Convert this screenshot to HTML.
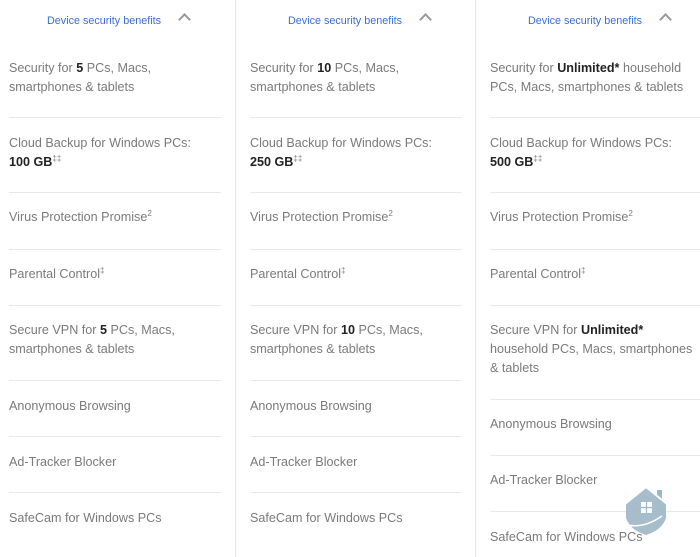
<!DOCTYPE html>
<html><head><meta charset="utf-8"><style>
body{margin:0;width:700px;height:557px;background:#fff;position:relative;overflow:hidden;font-family:"Liberation Sans",Arial,sans-serif}
.v{position:absolute;top:0;width:1px;height:557px;background:#e6e6e6}
.h{position:absolute;height:1px;background:#e8e8e8}
.t{position:absolute;font-size:12.6px;color:#7a7a7a;line-height:19px;white-space:nowrap;margin-top:2px}
.t b{color:#222}
.t sup{font-size:8px;line-height:0;vertical-align:5px}
.hd{position:absolute;top:15px;font-size:10.8px;color:#3a6fd3}
.ch{position:absolute;top:15px;width:7px;height:7px;border-left:2px solid #999;border-top:2px solid #999;transform:rotate(45deg)}
</style></head><body>
<div class="v" style="left:235px"></div><div class="v" style="left:475px"></div>

<div class="hd" style="left:47px">Device security benefits</div><div class="ch" style="left:180px"></div>
<div class="hd" style="left:288px">Device security benefits</div><div class="ch" style="left:421px"></div>
<div class="hd" style="left:528px">Device security benefits</div><div class="ch" style="left:661px"></div>

<!-- col1 -->
<div class="t" style="left:9px;top:57px">Security for <b>5</b> PCs, Macs,<br>smartphones &amp; tablets</div>
<div class="h" style="left:9px;width:212px;top:117px"></div>
<div class="t" style="left:9px;top:132px">Cloud Backup for Windows PCs:<br><b>100 GB</b><sup>‡‡</sup></div>
<div class="h" style="left:9px;width:212px;top:192px"></div>
<div class="t" style="left:9px;top:206px">Virus Protection Promise<sup>2</sup></div>
<div class="h" style="left:9px;width:212px;top:249px"></div>
<div class="t" style="left:9px;top:263px">Parental Control<sup>‡</sup></div>
<div class="h" style="left:9px;width:212px;top:305px"></div>
<div class="t" style="left:9px;top:319px">Secure VPN for <b>5</b> PCs, Macs,<br>smartphones &amp; tablets</div>
<div class="h" style="left:9px;width:212px;top:380px"></div>
<div class="t" style="left:9px;top:395px">Anonymous Browsing</div>
<div class="h" style="left:9px;width:212px;top:436px"></div>
<div class="t" style="left:9px;top:451px">Ad-Tracker Blocker</div>
<div class="h" style="left:9px;width:212px;top:492px"></div>
<div class="t" style="left:9px;top:507px">SafeCam for Windows PCs</div>

<!-- col2 -->
<div class="t" style="left:250px;top:57px">Security for <b>10</b> PCs, Macs,<br>smartphones &amp; tablets</div>
<div class="h" style="left:250px;width:212px;top:117px"></div>
<div class="t" style="left:250px;top:132px">Cloud Backup for Windows PCs:<br><b>250 GB</b><sup>‡‡</sup></div>
<div class="h" style="left:250px;width:212px;top:192px"></div>
<div class="t" style="left:250px;top:206px">Virus Protection Promise<sup>2</sup></div>
<div class="h" style="left:250px;width:212px;top:249px"></div>
<div class="t" style="left:250px;top:263px">Parental Control<sup>‡</sup></div>
<div class="h" style="left:250px;width:212px;top:305px"></div>
<div class="t" style="left:250px;top:319px">Secure VPN for <b>10</b> PCs, Macs,<br>smartphones &amp; tablets</div>
<div class="h" style="left:250px;width:212px;top:380px"></div>
<div class="t" style="left:250px;top:395px">Anonymous Browsing</div>
<div class="h" style="left:250px;width:212px;top:436px"></div>
<div class="t" style="left:250px;top:451px">Ad-Tracker Blocker</div>
<div class="h" style="left:250px;width:212px;top:492px"></div>
<div class="t" style="left:250px;top:507px">SafeCam for Windows PCs</div>

<!-- col3 -->
<div class="t" style="left:490px;top:57px">Security for <b>Unlimited*</b> household<br>PCs, Macs, smartphones &amp; tablets</div>
<div class="h" style="left:490px;width:210px;top:117px"></div>
<div class="t" style="left:490px;top:132px">Cloud Backup for Windows PCs:<br><b>500 GB</b><sup>‡‡</sup></div>
<div class="h" style="left:490px;width:210px;top:192px"></div>
<div class="t" style="left:490px;top:206px">Virus Protection Promise<sup>2</sup></div>
<div class="h" style="left:490px;width:210px;top:249px"></div>
<div class="t" style="left:490px;top:263px">Parental Control<sup>‡</sup></div>
<div class="h" style="left:490px;width:210px;top:305px"></div>
<div class="t" style="left:490px;top:319px">Secure VPN for <b>Unlimited*</b><br>household PCs, Macs, smartphones<br>&amp; tablets</div>
<div class="h" style="left:490px;width:210px;top:399px"></div>
<div class="t" style="left:490px;top:413px">Anonymous Browsing</div>
<div class="h" style="left:490px;width:210px;top:455px"></div>
<div class="t" style="left:490px;top:469px">Ad-Tracker Blocker</div>
<div class="h" style="left:490px;width:210px;top:511px"></div>
<div class="t" style="left:490px;top:526px">SafeCam for Windows PCs</div>

<svg style="position:absolute;left:622px;top:484px" width="48" height="52" viewBox="0 0 48 52">
<path d="M24 2 L45 20 L44 20 L44 34 Q40 46 24 51 Q8 46 4 34 L4 20 L3 20 Z" fill="#9db6c7" opacity="0.9"/>
<rect x="35" y="6" width="5" height="9" fill="#9db6c7"/>
<path d="M3 20 L24 3 L45 20" fill="none" stroke="#fff" stroke-width="2"/>
<rect x="19" y="18" width="11" height="11" fill="#fff"/>
<path d="M24.5 18 V29 M19 23.5 H30" stroke="#9db6c7" stroke-width="1.2"/>
<path d="M1 40 Q20 46 40 32" fill="none" stroke="#fff" stroke-width="1.5"/>
</svg>
</body></html>
